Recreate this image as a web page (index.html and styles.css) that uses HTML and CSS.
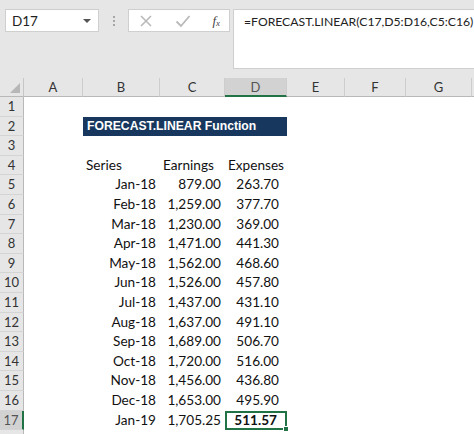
FILE: index.html
```html
<!DOCTYPE html>
<html>
<head>
<meta charset="utf-8">
<link rel="stylesheet" href="styles.css">
</head>
<body>
<div class="toolbar">
  <div class="namebox"><span class="name">D17</span><span class="caret"></span></div>
  <div class="grip"><i></i><i></i><i></i></div>
  <div class="fnbox">
    <svg class="ico" width="14" height="14" viewBox="0 0 14 14"><path d="M2 2 L12 12 M12 2 L2 12" stroke="#b9b9b9" stroke-width="1.6" fill="none"/></svg>
    <svg class="ico" width="16" height="14" viewBox="0 0 16 14"><path d="M1.5 7.5 L6 12 L14.5 2" stroke="#b9b9b9" stroke-width="1.8" fill="none"/></svg>
    <span class="fx">f<sub>x</sub></span>
  </div>
  <div class="formula">=FORECAST.LINEAR(C17,D5:D16,C5:C16)</div>
</div>
<div class="sheet">
  <div class="corner"><span class="tri"></span></div>
  <div class="ch">A</div><div class="ch">B</div><div class="ch">C</div><div class="ch sel">D</div><div class="ch">E</div><div class="ch">F</div><div class="ch">G</div><div class="ch last"></div>

  <div class="rh">1</div><div class="c"></div><div class="c"></div><div class="c"></div><div class="c"></div><div class="c"></div><div class="c"></div><div class="c"></div><div class="c"></div>

  <div class="rh">2</div><div class="c"></div><div class="title">FORECAST.LINEAR Function</div><div class="c"></div><div class="c"></div><div class="c"></div><div class="c"></div>

  <div class="rh">3</div><div class="c"></div><div class="c"></div><div class="c"></div><div class="c"></div><div class="c"></div><div class="c"></div><div class="c"></div><div class="c"></div>

  <div class="rh">4</div><div class="c"></div><div class="c l">Series</div><div class="c l">Earnings</div><div class="c l">Expenses</div><div class="c"></div><div class="c"></div><div class="c"></div><div class="c"></div>

  <div class="rh">5</div><div class="c"></div><div class="c r">Jan-18</div><div class="c r">879.00</div><div class="c rd">263.70</div><div class="c"></div><div class="c"></div><div class="c"></div><div class="c"></div>
  <div class="rh">6</div><div class="c"></div><div class="c r">Feb-18</div><div class="c r">1,259.00</div><div class="c rd">377.70</div><div class="c"></div><div class="c"></div><div class="c"></div><div class="c"></div>
  <div class="rh">7</div><div class="c"></div><div class="c r">Mar-18</div><div class="c r">1,230.00</div><div class="c rd">369.00</div><div class="c"></div><div class="c"></div><div class="c"></div><div class="c"></div>
  <div class="rh">8</div><div class="c"></div><div class="c r">Apr-18</div><div class="c r">1,471.00</div><div class="c rd">441.30</div><div class="c"></div><div class="c"></div><div class="c"></div><div class="c"></div>
  <div class="rh">9</div><div class="c"></div><div class="c r">May-18</div><div class="c r">1,562.00</div><div class="c rd">468.60</div><div class="c"></div><div class="c"></div><div class="c"></div><div class="c"></div>
  <div class="rh">10</div><div class="c"></div><div class="c r">Jun-18</div><div class="c r">1,526.00</div><div class="c rd">457.80</div><div class="c"></div><div class="c"></div><div class="c"></div><div class="c"></div>
  <div class="rh">11</div><div class="c"></div><div class="c r">Jul-18</div><div class="c r">1,437.00</div><div class="c rd">431.10</div><div class="c"></div><div class="c"></div><div class="c"></div><div class="c"></div>
  <div class="rh">12</div><div class="c"></div><div class="c r">Aug-18</div><div class="c r">1,637.00</div><div class="c rd">491.10</div><div class="c"></div><div class="c"></div><div class="c"></div><div class="c"></div>
  <div class="rh">13</div><div class="c"></div><div class="c r">Sep-18</div><div class="c r">1,689.00</div><div class="c rd">506.70</div><div class="c"></div><div class="c"></div><div class="c"></div><div class="c"></div>
  <div class="rh">14</div><div class="c"></div><div class="c r">Oct-18</div><div class="c r">1,720.00</div><div class="c rd">516.00</div><div class="c"></div><div class="c"></div><div class="c"></div><div class="c"></div>
  <div class="rh">15</div><div class="c"></div><div class="c r">Nov-18</div><div class="c r">1,456.00</div><div class="c rd">436.80</div><div class="c"></div><div class="c"></div><div class="c"></div><div class="c"></div>
  <div class="rh">16</div><div class="c"></div><div class="c r">Dec-18</div><div class="c r">1,653.00</div><div class="c rd">495.90</div><div class="c"></div><div class="c"></div><div class="c"></div><div class="c"></div>
  <div class="rh sel">17</div><div class="c"></div><div class="c r">Jan-19</div><div class="c r">1,705.25</div><div class="c rd active"><b>511.57</b><span class="handle"></span></div><div class="c"></div><div class="c"></div><div class="c"></div><div class="c"></div>
  <div class="rh"></div><div class="c"></div><div class="c"></div><div class="c"></div><div class="c"></div><div class="c"></div><div class="c"></div><div class="c"></div><div class="c"></div>
</div>
</body>
</html>
```

FILE: styles.css
```css
* { box-sizing: border-box; }
html, body { margin: 0; padding: 0; }
body {
  width: 474px;
  height: 434px;
  overflow: hidden;
  background: #ffffff;
  font-family: Lato, "Open Sans", sans-serif;
  color: #222;
}

.toolbar {
  height: 78px;
  background: #e6e6e6;
  display: flex;
  align-items: flex-start;
  padding: 9px 0 0 5px;
}
.namebox {
  width: 94px;
  height: 23px;
  background: #fff;
  border: 1px solid #cfcfcf;
  display: flex;
  align-items: center;
  justify-content: space-between;
  padding: 0 7px 0 6px;
  font-size: 13.5px;
  color: #222;
}
.caret {
  width: 0; height: 0;
  border-left: 4px solid transparent;
  border-right: 4px solid transparent;
  border-top: 4px solid #555;
}
.grip {
  width: 29px;
  height: 23px;
  display: flex;
  flex-direction: column;
  align-items: center;
  justify-content: center;
  gap: 2px;
}
.grip i {
  display: block;
  width: 2px; height: 2px;
  background: #a6a6a6;
}
.fnbox {
  width: 102px;
  height: 23px;
  background: #fff;
  border: 1px solid #cfcfcf;
  display: flex;
  align-items: center;
  justify-content: space-between;
  padding: 0 9px 0 10px;
}
.fx {
  font-family: "Liberation Serif", serif;
  font-style: italic;
  font-size: 13px;
  color: #444;
}
.fx sub { font-size: 9px; vertical-align: -1px; }
.formula {
  flex: 1;
  margin-left: 3px;
  height: 60px;
  background: #fff;
  border: 1px solid #cfcfcf;
  border-right: none;
  padding: 4px 0 0 10px;
  font-size: 12.2px;
  color: #222;
  white-space: nowrap;
  overflow: hidden;
}

.sheet {
  display: grid;
  grid-template-columns: 24px 59px 77px 65px 62px 58px 61px 66px 2px;
  grid-template-rows: 19px repeat(18, 19.6px);
  background: #fff;
}
.corner {
  background: #e6e6e6;
  border-right: 1px solid #c6c6c6;
  border-bottom: 1px solid #b8b8b8;
  position: relative;
}
.tri {
  position: absolute;
  right: 3px; bottom: 3px;
  width: 0; height: 0;
  border-left: 10px solid transparent;
  border-bottom: 10px solid #b7b7b7;
}
.ch {
  background: #e6e6e6;
  border-right: 1px solid #cdcdcd;
  border-bottom: 1px solid #b8b8b8;
  text-align: center;
  font-size: 13px;
  line-height: 18px;
  color: #333;
}
.ch.sel {
  background: #d2d2d2;
  border-bottom: 2px solid #217346;
  color: #555;
}
.ch.last { border-right: none; }
.rh {
  background: #e6e6e6;
  border-right: 1px solid #b8b8b8;
  border-bottom: 1px solid #d4d4d4;
  text-align: center;
  font-size: 13px;
  line-height: 19px;
  color: #333;
}
.rh.sel {
  background: #d2d2d2;
  border-right: 2px solid #217346;
  color: #555;
}
.c {
  font-size: 13.6px;
  line-height: 19.6px;
  white-space: nowrap;
  color: #111;
}
.c.l { padding-left: 3px; }
.c.r { text-align: right; padding-right: 4px; }
.c.rd { text-align: right; padding-right: 8px; }
.title {
  grid-column: span 3;
  background: #17375e;
  color: #fff;
  font-family: "Liberation Sans", Arial, sans-serif;
  font-weight: bold;
  font-size: 12.2px;
  line-height: 19.6px;
  padding-left: 4px;
  white-space: nowrap;
}
.active {
  position: relative;
  border: 2px solid #217346;
  line-height: 15.6px;
  padding-right: 6px;
}
.handle {
  position: absolute;
  right: -4px; bottom: -4px;
  width: 6px; height: 6px;
  background: #217346;
  border: 1px solid #fff;
}
```
